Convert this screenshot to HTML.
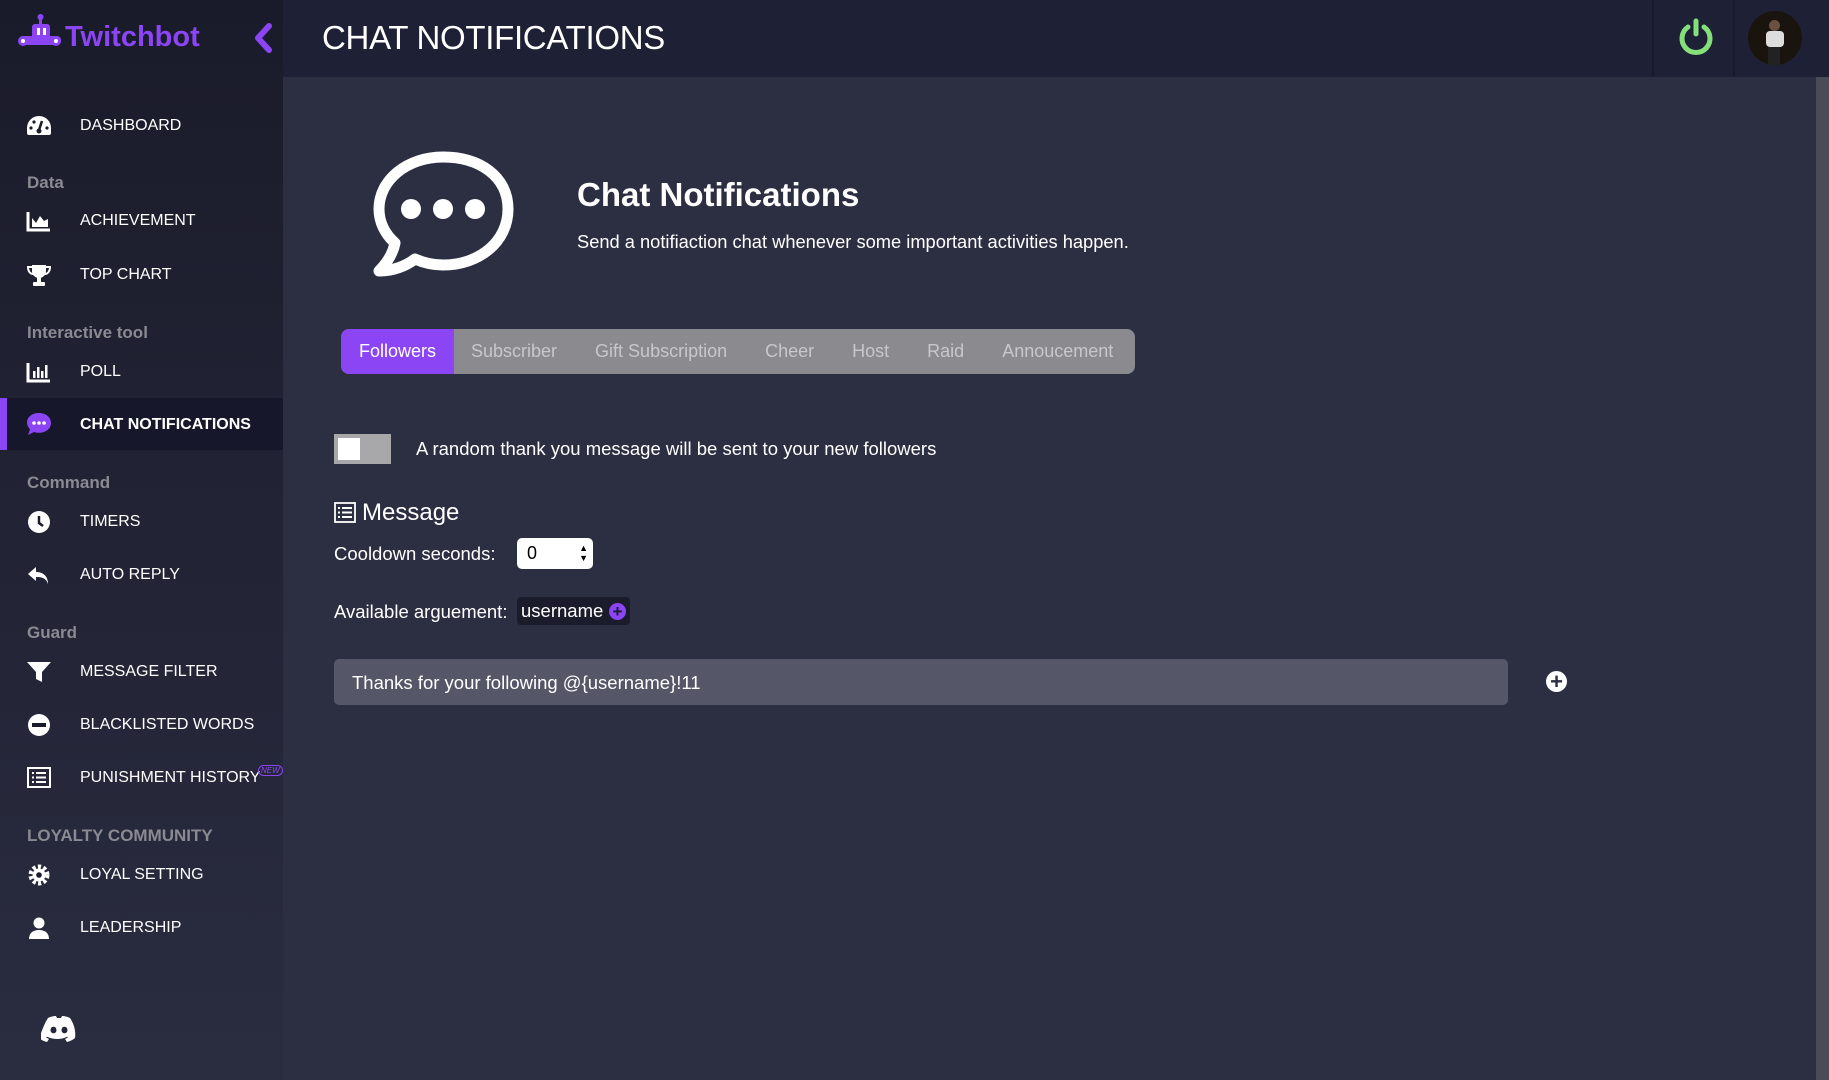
<!DOCTYPE html>
<html><head><meta charset="utf-8"><style>
*{margin:0;padding:0;box-sizing:border-box}
body{width:1829px;height:1080px;overflow:hidden;background:#2c2e42;font-family:"Liberation Sans",sans-serif;color:#fff;position:relative}
.side{position:absolute;left:0;top:0;width:283px;height:1080px;background:linear-gradient(#1a1b2a,#2a2c40)}
.hdr{position:absolute;left:283px;top:0;width:1546px;height:77px;background:#1e2136}
.item{position:absolute;left:0;width:283px;height:54px;display:flex;align-items:center;font-size:16px}
.item .ic{position:absolute;left:26px;top:16px;width:26px;height:24px}
.item span{position:absolute;left:80px;top:19px}
.sec{position:absolute;left:27px;font-size:17px;font-weight:bold;color:#8a8a92}
.tabs{position:absolute;left:341px;top:329px;width:794px;height:45px;background:#8a8a8f;border-radius:8px;display:flex;align-items:center;font-size:18px;color:#c8c8cc;overflow:hidden}
.tabs div{padding:0 19px}
</style></head><body>
<div class="side">
 <svg style="position:absolute;left:16px;top:14px" width="48" height="36" viewBox="0 0 48 36"><g fill="#8b45f5"><rect x="16" y="10" width="18" height="18" rx="3"/><rect x="23" y="2" width="3" height="9"/><circle cx="24.5" cy="3" r="3"/><circle cx="7" cy="27" r="5"/><circle cx="40" cy="27" r="5"/><rect x="5" y="22" width="40" height="9" rx="4"/></g><g fill="#fff"><rect x="21" y="14" width="3" height="7"/><rect x="27" y="14" width="3" height="7"/><circle cx="7" cy="27" r="2"/><circle cx="40" cy="27" r="2"/></g></svg>
 <div style="position:absolute;left:65px;top:21px;font-size:29px;font-weight:bold;color:#8b45f5">Twitchbot</div>
 <svg style="position:absolute;left:252px;top:23px" width="22" height="30" viewBox="0 0 22 30"><path d="M17 3 L6 15 L17 27" stroke="#8b45f5" stroke-width="6" fill="none" stroke-linecap="round" stroke-linejoin="round"/></svg>

 <div class="item" style="top:98px"><svg class="ic" viewBox="0 0 26 24"><path d="M13 2A12 12 0 0 0 1 14v5a2 2 0 0 0 2 2h20a2 2 0 0 0 2-2v-5A12 12 0 0 0 13 2z" fill="#fff"/><path d="M13 16l3-9" stroke="#1b1c2b" stroke-width="2.5"/><circle cx="5" cy="14" r="1.6" fill="#1b1c2b"/><circle cx="8" cy="8" r="1.6" fill="#1b1c2b"/><circle cx="21" cy="14" r="1.6" fill="#1b1c2b"/><circle cx="13" cy="17" r="2.5" fill="#1b1c2b"/></svg><span>DASHBOARD</span></div>
 <div class="sec" style="top:173px">Data</div>
 <div class="item" style="top:193px"><svg class="ic" viewBox="0 0 26 24"><path d="M2 3v18h22" stroke="#fff" stroke-width="3" fill="none"/><path d="M6 18V9l4 5 4-7 4 5 4-2v8z" fill="#fff"/></svg><span>ACHIEVEMENT</span></div>
 <div class="item" style="top:247px"><svg class="ic" viewBox="0 0 26 24"><path d="M6 2h14v6a7 7 0 0 1-14 0z" fill="#fff"/><path d="M6 4H2c0 5 3 7 5 7M20 4h4c0 5-3 7-5 7" stroke="#fff" stroke-width="2" fill="none"/><rect x="11" y="14" width="4" height="5" fill="#fff"/><rect x="7" y="19" width="12" height="4" rx="1" fill="#fff"/></svg><span>TOP CHART</span></div>
 <div class="sec" style="top:323px">Interactive tool</div>
 <div class="item" style="top:344px"><svg class="ic" viewBox="0 0 26 24"><path d="M2 3v18h22" stroke="#fff" stroke-width="3" fill="none"/><rect x="7" y="11" width="2.5" height="7" fill="#fff"/><rect x="11" y="7" width="2.5" height="11" fill="#fff"/><rect x="15" y="11" width="2.5" height="7" fill="#fff"/><rect x="19" y="5" width="2.5" height="13" fill="#fff"/></svg><span>POLL</span></div>
 <div class="item" style="top:398px;height:52px;background:#16172a;border-left:7px solid #8b45f5;font-weight:bold"><svg class="ic" viewBox="0 0 26 24" style="left:19px;top:14px"><path d="M13 1C6 1 1 5 1 10.5c0 2.6 1.1 4.9 3 6.7L2 23l6-3c1.5.5 3.2.8 5 .8 7 0 12-4.3 12-9.8S20 1 13 1z" fill="#8b45f5"/><circle cx="8" cy="11" r="1.8" fill="#fff"/><circle cx="13" cy="11" r="1.8" fill="#fff"/><circle cx="18" cy="11" r="1.8" fill="#fff"/></svg><span style="left:73px;top:18px">CHAT NOTIFICATIONS</span></div>
 <div class="sec" style="top:473px">Command</div>
 <div class="item" style="top:494px"><svg class="ic" viewBox="0 0 26 24"><circle cx="13" cy="12" r="11" fill="#fff"/><path d="M13 6v7l4 3" stroke="#1b1c2b" stroke-width="2.5" fill="none"/></svg><span>TIMERS</span></div>
 <div class="item" style="top:547px"><svg class="ic" viewBox="0 0 26 24"><path d="M10 4L2 11l8 7v-4c6 0 10 1 12 7 0-7-4-12-12-12z" fill="#fff"/></svg><span>AUTO REPLY</span></div>
 <div class="sec" style="top:623px">Guard</div>
 <div class="item" style="top:644px"><svg class="ic" viewBox="0 0 26 24"><path d="M1 2h24l-9 10v10l-6-3v-7z" fill="#fff"/></svg><span>MESSAGE FILTER</span></div>
 <div class="item" style="top:697px"><svg class="ic" viewBox="0 0 26 24"><circle cx="13" cy="12" r="11" fill="#fff"/><rect x="6" y="10" width="14" height="4" fill="#1b1c2b"/></svg><span>BLACKLISTED WORDS</span></div>
 <div class="item" style="top:750px"><svg class="ic" viewBox="0 0 26 24"><rect x="2" y="2" width="22" height="19" fill="none" stroke="#fff" stroke-width="2"/><g fill="#fff"><rect x="6" y="6" width="2" height="2"/><rect x="10" y="6" width="10" height="2"/><rect x="6" y="10.5" width="2" height="2"/><rect x="10" y="10.5" width="10" height="2"/><rect x="6" y="15" width="2" height="2"/><rect x="10" y="15" width="10" height="2"/></g></svg><span>PUNISHMENT HISTORY</span><div style="position:absolute;left:258px;top:15px;font-size:8px;color:#8b45f5;border:1.5px solid #8b45f5;border-radius:6px;padding:0 2px;font-style:italic">NEW</div></div>
 <div class="sec" style="top:826px">LOYALTY COMMUNITY</div>
 <div class="item" style="top:847px"><svg class="ic" viewBox="0 0 26 24"><circle cx="13" cy="12" r="8" fill="none" stroke="#fff" stroke-width="5" stroke-dasharray="3 2.2"/><circle cx="13" cy="12" r="6.5" fill="#fff"/><circle cx="13" cy="12" r="2.8" fill="#1b1c2b"/></svg><span>LOYAL SETTING</span></div>
 <div class="item" style="top:900px"><svg class="ic" viewBox="0 0 26 24"><circle cx="13" cy="7" r="5.5" fill="#fff"/><path d="M3 23c0-6 4-9 10-9s10 3 10 9z" fill="#fff"/></svg><span>LEADERSHIP</span></div>
 <svg style="position:absolute;left:41px;top:1015px" width="36" height="28" viewBox="0 0 36 28"><path d="M7 3c3-1.5 6-2 8-2l1 2h4l1-2c2 0 5 .5 8 2 4 6 6 13 5 20-3 2.5-6 3.5-8 4l-2-3 3-1.5-1-.8c-6 3-13 3-20 0l-1 .8 3 1.5-2 3c-2-.5-5-1.5-8-4C1 16 3 9 7 3z" fill="#fff"/><ellipse cx="12.5" cy="15" rx="3" ry="3.3" fill="#232538"/><ellipse cx="23.5" cy="15" rx="3" ry="3.3" fill="#232538"/></svg>
</div>

<div class="hdr">
 <div style="position:absolute;left:39px;top:19px;font-size:33px;letter-spacing:-0.3px">CHAT NOTIFICATIONS</div>
 <div style="position:absolute;left:1369px;top:0;width:2px;height:77px;background:#181a2d"></div>
 <div style="position:absolute;left:1450px;top:0;width:2px;height:77px;background:#181a2d"></div>
 <svg style="position:absolute;left:1393px;top:17px" width="40" height="40" viewBox="0 0 40 40"><path d="M12 10A14 14 0 1 0 28 10" stroke="#86e07a" stroke-width="5" fill="none" stroke-linecap="round"/><path d="M20 4v13" stroke="#86e07a" stroke-width="5" stroke-linecap="round"/></svg>
 <div style="position:absolute;left:1465px;top:11px;width:54px;height:54px;border-radius:50%;background:#1a140e;overflow:hidden"><div style="position:absolute;left:21px;top:9px;width:11px;height:11px;border-radius:50%;background:#6a5040"></div><div style="position:absolute;left:18px;top:20px;width:18px;height:16px;background:#ddd;border-radius:4px"></div><div style="position:absolute;left:20px;top:36px;width:12px;height:18px;background:#222"></div></div>
</div>
<div style="position:absolute;left:1816px;top:77px;width:13px;height:1003px;background:#4a4b58"></div>

<svg style="position:absolute;left:371px;top:150px" width="145" height="128" viewBox="0 0 145 128"><path d="M72 7C36 7 8 30 8 59c0 13 6 25 16 34-2 10-8 20-16 28 14 0 27-5 36-12 9 4 18 6 28 6 36 0 65-23 65-56S108 7 72 7z" fill="none" stroke="#fff" stroke-width="11" stroke-linejoin="round"/><circle cx="40" cy="59" r="10" fill="#fff"/><circle cx="72" cy="59" r="10" fill="#fff"/><circle cx="104" cy="59" r="10" fill="#fff"/></svg>
<div style="position:absolute;left:577px;top:176px;font-size:33px;font-weight:bold">Chat Notifications</div>
<div style="position:absolute;left:577px;top:231px;font-size:18.3px">Send a notifiaction chat whenever some important activities happen.</div>

<div class="tabs"><div style="background:#8b45f5;color:#fff;height:45px;line-height:45px;width:113px;padding:0;text-align:center">Followers</div><div style="padding-left:17px">Subscriber</div><div>Gift Subscription</div><div>Cheer</div><div>Host</div><div>Raid</div><div>Annoucement</div></div>

<div style="position:absolute;left:334px;top:434px;width:57px;height:30px;background:#a8a8ab"><div style="position:absolute;left:4px;top:4px;width:22px;height:22px;background:#fff"></div></div>
<div style="position:absolute;left:416px;top:438px;font-size:18.5px">A random thank you message will be sent to your new followers</div>

<svg style="position:absolute;left:334px;top:502px" width="22" height="21" viewBox="0 0 22 21"><rect x="1" y="1" width="20" height="19" fill="none" stroke="#fff" stroke-width="1.8"/><g fill="#fff"><rect x="4" y="5" width="2" height="2"/><rect x="8" y="5" width="10" height="2"/><rect x="4" y="9.5" width="2" height="2"/><rect x="8" y="9.5" width="10" height="2"/><rect x="4" y="14" width="2" height="2"/><rect x="8" y="14" width="10" height="2"/></g></svg>
<div style="position:absolute;left:362px;top:499px;font-size:24px">Message</div>
<div style="position:absolute;left:334px;top:543px;font-size:18.5px">Cooldown seconds:</div>
<div style="position:absolute;left:517px;top:538px;width:76px;height:31px;background:#fff;border-radius:5px;color:#000;font-size:18px;padding:5px 10px">0<span style="position:absolute;right:5px;top:5px;font-size:9px;line-height:10px">▲<br>▼</span></div>
<div style="position:absolute;left:334px;top:601px;font-size:18.5px">Available arguement:</div>
<div style="position:absolute;left:517px;top:597px;width:113px;height:28px;background:#1b1c2b;border-radius:4px;font-size:18.5px;padding:3px 4px">username<span style="position:absolute;right:4px;top:6px;width:17px;height:17px;border-radius:50%;background:#8b45f5;color:#1b1c2b;font-size:17px;line-height:17px;text-align:center;font-weight:bold">+</span></div>

<div style="position:absolute;left:334px;top:659px;width:1174px;height:46px;background:#555667;border-radius:5px;font-size:18.5px;padding:13px 18px">Thanks for your following @{username}!11</div>
<div style="position:absolute;left:1546px;top:671px;width:21px;height:21px;border-radius:50%;background:#fff;color:#2c2e42;font-size:22px;line-height:21px;text-align:center;font-weight:bold">+</div>
</body></html>
